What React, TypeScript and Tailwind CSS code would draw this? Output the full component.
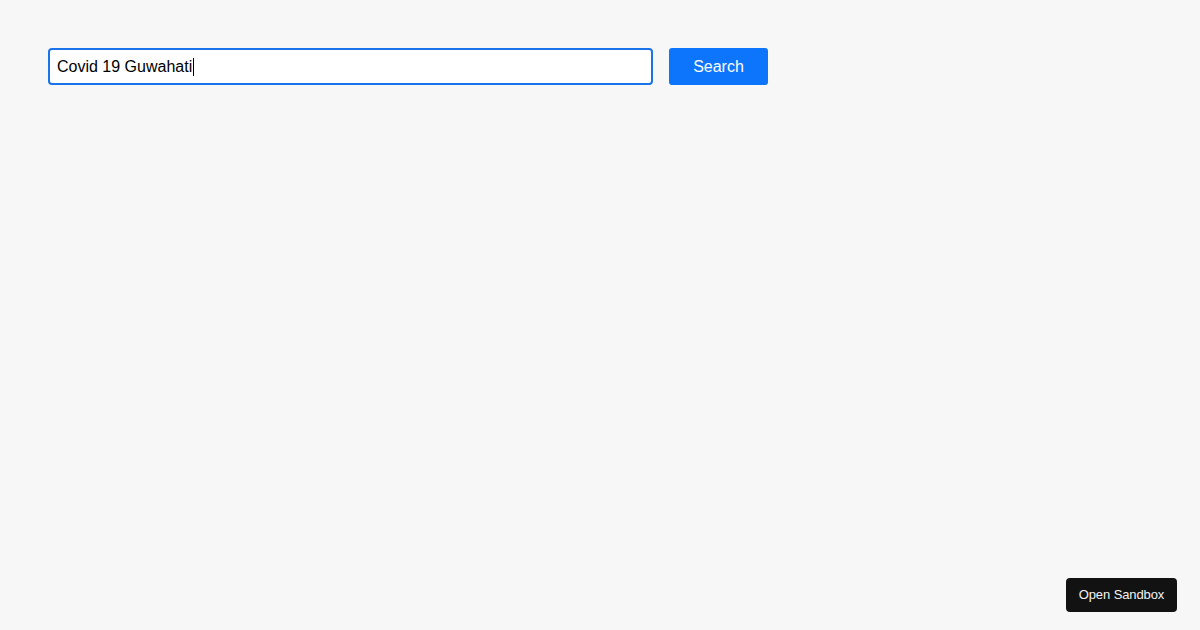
export default function App() {
  return (
    <div className="min-h-[630px] w-full bg-[#f7f7f7] font-['Liberation_Sans',Arial,sans-serif]">
      <div className="flex items-center gap-4 px-12 pt-12">
        <div className="flex h-[37px] w-[605px] items-center rounded-[4px] border-2 border-[#1a73e8] bg-white px-[7px] text-[16px] text-black">
          <span>Covid 19 Guwahati</span>
          <span className="ml-[1px] inline-block h-[18px] w-[1px] bg-black" />
        </div>
        <button className="h-[37px] w-[99px] rounded-[3px] bg-[#0d75fc] text-[16px] text-white">
          Search
        </button>
      </div>
      <div className="fixed bottom-[18px] right-[23px] flex h-[34px] w-[111px] items-center justify-center rounded-[4px] bg-[#121212] text-[13px] tracking-[-0.1px] text-[#f2f2f2]">
        Open Sandbox
      </div>
    </div>
  );
}
